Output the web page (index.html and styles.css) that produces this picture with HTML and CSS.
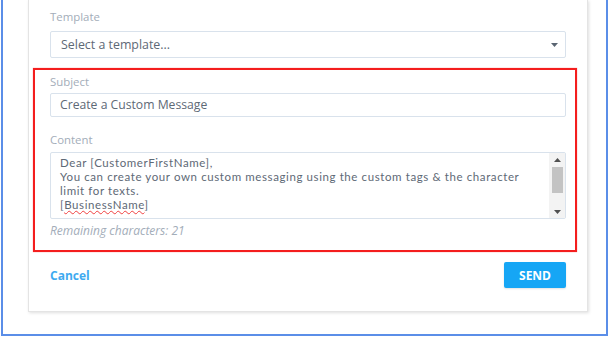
FILE: index.html
```html
<!DOCTYPE html>
<html>
<head>
<meta charset="utf-8">
<link rel="stylesheet" href="styles.css">
</head>
<body>
<div class="frame">
  <div class="card">
    <label class="label">Template</label>
    <div class="select">
      <span>Select a template...</span>
      <svg class="caret" width="7" height="4" viewBox="0 0 7 4"><path d="M0 0h7L3.5 4z" fill="#5a6572"/></svg>
    </div>
    <div class="highlight">
      <label class="label">Subject</label>
      <div class="input">Create a Custom Message</div>
      <label class="label label-content">Content</label>
      <div class="textarea">
        <div class="text">Dear [CustomerFirstName],<br>You can create your own custom messaging using the custom tags &amp; the character limit for texts.<br>[<span class="spell">BusinessName</span>]</div>
        <div class="scrollbar">
          <svg width="7" height="4" viewBox="0 0 7 4"><path d="M3.5 0L7 4H0z" fill="#505050"/></svg>
          <div class="thumb"></div>
          <svg width="7" height="4" viewBox="0 0 7 4"><path d="M0 0h7L3.5 4z" fill="#505050"/></svg>
        </div>
      </div>
      <div class="remaining">Remaining characters: 21</div>
    </div>
    <div class="footer">
      <a class="cancel">Cancel</a>
      <button class="send">SEND</button>
    </div>
  </div>
</div>
</body>
</html>
```

FILE: styles.css
```css
* { box-sizing: border-box; }
html, body { margin: 0; padding: 0; background: #fff; }
body { font-family: "Open Sans", Lato, sans-serif; color: #5e6976; }

.frame {
  margin-left: 1px;
  width: 607px;
  height: 336px;
  border: 2px solid #5b8ee8;
  border-top: none;
  padding-left: 25px;
}

.card {
  width: 560px;
  height: 312px;
  border: 1px solid #e4e4e4;
  border-top: none;
  box-shadow: 1px 1px 3px rgba(0,0,0,0.13);
  padding: 10px 21px 0 21px;
  background: #fff;
}

.label {
  display: block;
  font-size: 11.4px;
  line-height: 14px;
  color: #a3adb9;
  margin-bottom: 7px;
}

.select {
  height: 27px;
  border: 1px solid #d9e2ec;
  border-radius: 2px;
  display: flex;
  align-items: center;
  justify-content: space-between;
  padding: 0 7px 0 10px;
  font-size: 12.4px;
  color: #5e6976;
}
.caret { display: block; }

.highlight {
  margin: 10px -11px 0 -17px;
  border: 2px solid #f41e1e;
  box-shadow: 0 0 1px rgba(255,0,0,0.5);
  padding: 5px 9px 12px 15px;
}
.highlight .label { margin-bottom: 4px; }
.highlight .label-content { margin-top: 16px; margin-bottom: 5px; }

.input {
  height: 24px;
  border: 1px solid #d9e2ec;
  border-radius: 2px;
  padding: 0 9px;
  font-size: 12.2px;
  line-height: 22px;
  color: #5e6976;
}

.textarea {
  height: 67px;
  border: 1px solid #d9e2ec;
  border-radius: 2px;
  display: flex;
}
.textarea .text {
  flex: 1;
  padding: 3px 22px 0 9px;
  font-family: Lato, "Open Sans", sans-serif;
  font-size: 11.5px;
  letter-spacing: 0.6px;
  line-height: 14px;
  color: #5e6976;
}
.spell { text-decoration: underline wavy #f04040; text-decoration-thickness: 1px; }

.scrollbar {
  width: 16px;
  background: #f3f3f3;
  display: flex;
  flex-direction: column;
  align-items: center;
  padding: 5px 0 4px;
}
.scrollbar .thumb {
  width: 11px;
  height: 26px;
  background: #c3c3c3;
  margin: 5px 0 auto;
}

.remaining {
  margin-top: 5px;
  font-size: 12px;
  line-height: 14px;
  font-style: italic;
  color: #a3adb9;
}

.footer {
  margin-top: 10px;
  height: 26px;
  display: flex;
  align-items: center;
  justify-content: space-between;
}
.cancel {
  font-size: 12px;
  font-weight: 700;
  color: #3eaaf0;
}
.send {
  width: 62px;
  height: 26px;
  border: none;
  border-radius: 2px;
  background: #16a6f5;
  color: #fff;
  font-family: "Open Sans", sans-serif;
  font-size: 12px;
  font-weight: 700;
  box-shadow: 0 1px 2px rgba(0,0,0,0.12);
}
```
